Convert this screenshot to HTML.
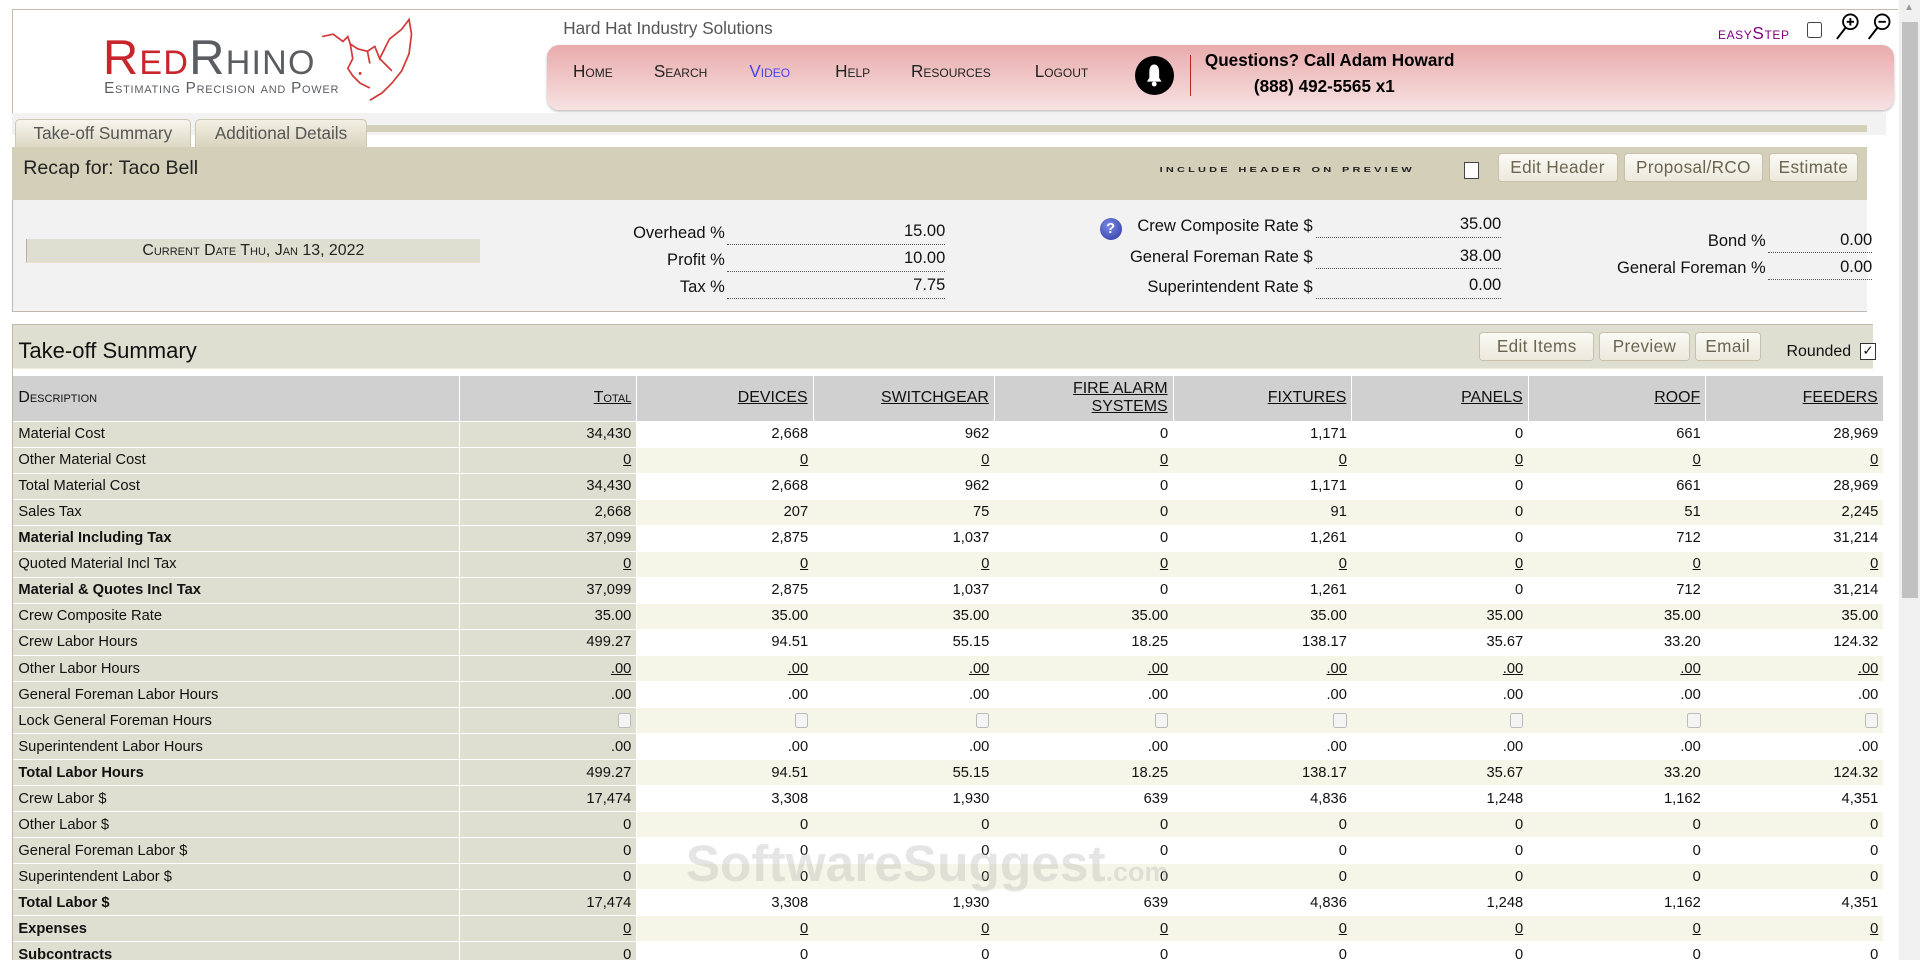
<!DOCTYPE html>
<html><head><meta charset="utf-8">
<style>
*{margin:0;padding:0;box-sizing:border-box}
html,body{width:1920px;height:960px;overflow:hidden;background:#fff}
#w{position:absolute;left:0;top:0;width:1568px;height:784px;zoom:1.22449;font-family:"Liberation Sans",sans-serif;color:#111;overflow:hidden}
.a{position:absolute}
.sc{font-variant:small-caps}
.btn{position:absolute;top:0;height:24px;border:1px solid #c8c0a8;border-radius:3px;background:linear-gradient(#fbfbf5,#ece9dc);color:#6b6450;font-size:14px;line-height:22px;text-align:center;white-space:nowrap;overflow:hidden;letter-spacing:.3px}
.lbl{position:absolute;font-size:13.5px;text-align:right;color:#111}
.val{position:absolute;font-size:13.5px;text-align:right;border-bottom:1px dotted #555;height:20px;line-height:18px}
table{border-collapse:collapse;position:absolute;left:11px;top:307px;table-layout:fixed;font-size:12px}
td,th{height:21.27px;padding:0 4px;white-space:nowrap;overflow:hidden;text-align:right;border-bottom:1px solid #fff}
th{background:#d0d0d0;height:37px;font-weight:normal;font-size:13px;line-height:15px;border-right:1px solid #fff}
td.d{background:#dfdfd1;text-align:left;border-right:1px solid #fff}
td.t{background:#dfdfd1;border-right:1px solid #fff}
tbody tr:nth-child(odd) td:not(.d):not(.t){background:#fff}
tbody tr:nth-child(even) td:not(.d):not(.t){background:#f6f6e8}
.cb{display:inline-block;width:11px;height:12px;border:1px solid #bbb;border-radius:2px;background:#f4f4f4;vertical-align:middle}
u{text-decoration:underline}
</style></head><body><div id="w">
<div class="a" style="left:10px;top:7px;width:1540px;height:1px;background:#c9b9a9"></div>
<div class="a" style="left:10px;top:7px;width:1px;height:85px;background:#c9b9a9"></div>
<div class="a" style="left:84px;top:27px;font-size:40px;letter-spacing:1px;line-height:42px;font-variant:small-caps"><span style="color:#c8262c">Red</span><span style="color:#5a5d62">Rhino</span></div>
<div class="a" style="left:85px;top:65px;font-size:12.5px;color:#5a5d62;font-variant:small-caps;letter-spacing:.6px">Estimating Precision and Power</div>
<svg class="a" style="left:258px;top:14px" width="84" height="70" viewBox="0 0 84 70"><path d="M5 16 L14 14 L22 20 L26 16 L28 22 L34 26 L42 28 L48 24 L52 34 L60 18 L70 10 L76 2 L78 14 L76 30 L70 44 L62 54 L54 62 L44 68 M52 34 L58 40 L62 44 M28 22 L30 34 L26 42 L30 48 L36 54 L44 58 M42 28 L44 38" fill="none" stroke="#d23a3a" stroke-width="1.4"/><circle cx="36" cy="46" r="1.2" fill="#d23a3a"/></svg>
<div class="a" style="left:460px;top:15px;font-size:14px;color:#555">Hard Hat Industry Solutions</div>
<div class="a" style="left:1403px;top:19px;font-size:14px;color:#800080;font-variant:small-caps;letter-spacing:.5px">easyStep</div>
<div class="a" style="left:1476px;top:18px;width:12px;height:13px;border:1px solid #444;border-radius:2px"></div>
<svg class="a" style="left:1496px;top:10px" width="50" height="24" viewBox="0 0 50 24"><circle cx="15" cy="8" r="6" fill="none" stroke="#000" stroke-width="1.5"/><path d="M15 5v6M12 8h6M11 13L4 22" stroke="#000" stroke-width="1.6" fill="none"/><circle cx="41" cy="8" r="6" fill="none" stroke="#000" stroke-width="1.5"/><path d="M38 8h6M37 13L30 22" stroke="#000" stroke-width="1.6" fill="none"/></svg>
<div class="a" style="left:447px;top:37px;width:1100px;height:53px;border-radius:10px;background:linear-gradient(#e9abac,#f7e2e2);box-shadow:0 1px 2px #bbb"></div>
<div class="a sc" style="left:468px;top:50px;font-size:14px;color:#222">Home</div>
<div class="a sc" style="left:534px;top:50px;font-size:14px;color:#222">Search</div>
<div class="a sc" style="left:612px;top:50px;font-size:14px;color:#44e">Video</div>
<div class="a sc" style="left:682px;top:50px;font-size:14px;color:#222">Help</div>
<div class="a sc" style="left:744px;top:50px;font-size:14px;color:#222">Resources</div>
<div class="a sc" style="left:845px;top:50px;font-size:14px;color:#222">Logout</div>
<div class="a" style="left:927px;top:46px;width:32px;height:32px;border-radius:50%;background:#000"></div>
<svg class="a" style="left:933px;top:51px" width="20" height="22" viewBox="0 0 20 22"><path d="M10 2c-3 0-4 3-4 6v5l-2 3h12l-2-3V8c0-3-1-6-4-6z" fill="#fff"/><circle cx="10" cy="18" r="2" fill="#fff"/></svg>
<div class="a" style="left:972px;top:45px;width:1px;height:33px;background:#b22"></div>
<div class="a" style="left:984px;top:41px;font-size:14px;font-weight:bold;color:#000">Questions? Call Adam Howard</div>
<div class="a" style="left:1024px;top:62px;font-size:14px;font-weight:bold;color:#000">(888) 492-5565 x1</div>
<div class="a" style="left:10px;top:92px;width:1530px;height:18px;background:#f2f2f2"></div>
<div class="a" style="left:300px;top:102px;width:1225px;height:6px;background:#d4cfb8"></div>
<div class="a" style="left:12px;top:97px;width:144px;height:24px;border:1px solid #cfc8b0;border-bottom:none;border-radius:4px 4px 0 0;background:linear-gradient(#f8f6ee,#dcd7c2);font-size:14px;color:#555;text-align:center;line-height:22px">Take-off Summary</div>
<div class="a" style="left:159px;top:97px;width:141px;height:24px;border:1px solid #cfc8b0;border-bottom:none;border-radius:4px 4px 0 0;background:linear-gradient(#f3f0e4,#d8d2bc);font-size:14px;color:#555;text-align:center;line-height:22px">Additional Details</div>
<div class="a" style="left:10px;top:120px;width:1515px;height:43px;background:#d4cfb8"></div>
<div class="a" style="left:19px;top:128px;font-size:16px;color:#222">Recap for: Taco Bell</div>
<div class="a" style="left:947px;top:131px;font-size:13px;font-weight:bold;letter-spacing:2.6px;color:#222;font-variant:small-caps;transform:scaleY(.7);white-space:nowrap">include header on preview</div>
<div class="a" style="left:1196px;top:132px;width:12px;height:14px;border:1px solid #444;background:#fff"></div>
<div style="position:absolute;left:1223px;top:125px"><div class="btn" style="left:0;width:98px">Edit Header</div><div class="btn" style="left:103px;width:114px">Proposal/RCO</div><div class="btn" style="left:222px;width:72px">Estimate</div></div>
<div class="a" style="left:10px;top:163px;width:1515px;height:92px;background:#f2f2f2;border-left:1px solid #c0b8b0;border-bottom:1px solid #c0b8b0"></div>
<div class="a sc" style="left:21px;top:195px;width:371px;height:20px;background:#dfdfd1;border-left:1px solid #b8b0a0;border-bottom:1px solid #f0e0c8;font-size:13px;text-align:center;line-height:20px;color:#222">Current Date Thu, Jan 13, 2022</div>
<div class="lbl" style="left:470px;top:182px;width:122px">Overhead %</div><div class="val" style="left:594px;top:180px;width:178px">15.00</div>
<div class="lbl" style="left:470px;top:204px;width:122px">Profit %</div><div class="val" style="left:594px;top:202px;width:178px">10.00</div>
<div class="lbl" style="left:470px;top:226px;width:122px">Tax %</div><div class="val" style="left:594px;top:224px;width:178px">7.75</div>
<div class="a" style="left:898px;top:178px;width:18px;height:18px;border-radius:50%;background:radial-gradient(circle at 40% 35%,#7a8ae8,#2a36a0);color:#fff;font-size:12px;font-weight:bold;text-align:center;line-height:18px">?</div>
<div class="lbl" style="left:900px;top:176px;width:172px">Crew Composite Rate $</div><div class="val" style="left:1075px;top:174px;width:151px">35.00</div>
<div class="lbl" style="left:880px;top:202px;width:192px">General Foreman Rate $</div><div class="val" style="left:1075px;top:200px;width:151px">38.00</div>
<div class="lbl" style="left:880px;top:226px;width:192px">Superintendent Rate $</div><div class="val" style="left:1075px;top:224px;width:151px">0.00</div>
<div class="lbl" style="left:1300px;top:189px;width:142px">Bond %</div><div class="val" style="left:1444px;top:187px;width:85px">0.00</div>
<div class="lbl" style="left:1300px;top:211px;width:142px">General Foreman %</div><div class="val" style="left:1444px;top:209px;width:85px">0.00</div>
<div class="a" style="left:10px;top:265px;width:1520px;height:36px;background:#dfdfd1;border-top:1px solid #c0b8a8;border-left:1px solid #c0b8a8;border-bottom:1px solid #f5ecd8"></div>
<div class="a" style="left:15px;top:276px;font-size:18px;color:#111">Take-off Summary</div>
<div style="position:absolute;left:1208px;top:271px"><div class="btn" style="left:0;width:94px">Edit Items</div><div class="btn" style="left:98px;width:74px">Preview</div><div class="btn" style="left:176px;width:54px">Email</div></div>
<div class="a" style="left:1459px;top:280px;font-size:13px;color:#111">Rounded</div>
<div class="a" style="left:1519px;top:280px;width:13px;height:14px;border:1px solid #333;font-size:11px;line-height:12px;text-align:center;background:#fff">✓</div>
<div class="a" style="left:10px;top:301px;width:1px;height:483px;background:#c0b8a8"></div>
<table>
<colgroup><col style="width:364px"><col style="width:145px"><col style="width:144px"><col style="width:148px"><col style="width:146px"><col style="width:146px"><col style="width:144px"><col style="width:145px"><col style="width:145px"></colgroup>
<thead><tr><th style="text-align:left" class="sc">Description</th><th class="sc"><u>Total</u></th><th><u>DEVICES</u></th><th><u>SWITCHGEAR</u></th><th><u>FIRE ALARM<br>SYSTEMS</u></th><th><u>FIXTURES</u></th><th><u>PANELS</u></th><th><u>ROOF</u></th><th><u>FEEDERS</u></th></tr></thead>
<tbody>
<tr><td class="d">Material Cost</td><td class="t">34,430</td><td>2,668</td><td>962</td><td>0</td><td>1,171</td><td>0</td><td>661</td><td>28,969</td></tr>
<tr><td class="d">Other Material Cost</td><td class="t"><u>0</u></td><td><u>0</u></td><td><u>0</u></td><td><u>0</u></td><td><u>0</u></td><td><u>0</u></td><td><u>0</u></td><td><u>0</u></td></tr>
<tr><td class="d">Total Material Cost</td><td class="t">34,430</td><td>2,668</td><td>962</td><td>0</td><td>1,171</td><td>0</td><td>661</td><td>28,969</td></tr>
<tr><td class="d">Sales Tax</td><td class="t">2,668</td><td>207</td><td>75</td><td>0</td><td>91</td><td>0</td><td>51</td><td>2,245</td></tr>
<tr><td class="d"><b>Material Including Tax</b></td><td class="t">37,099</td><td>2,875</td><td>1,037</td><td>0</td><td>1,261</td><td>0</td><td>712</td><td>31,214</td></tr>
<tr><td class="d">Quoted Material Incl Tax</td><td class="t"><u>0</u></td><td><u>0</u></td><td><u>0</u></td><td><u>0</u></td><td><u>0</u></td><td><u>0</u></td><td><u>0</u></td><td><u>0</u></td></tr>
<tr><td class="d"><b>Material &amp; Quotes Incl Tax</b></td><td class="t">37,099</td><td>2,875</td><td>1,037</td><td>0</td><td>1,261</td><td>0</td><td>712</td><td>31,214</td></tr>
<tr><td class="d">Crew Composite Rate</td><td class="t">35.00</td><td>35.00</td><td>35.00</td><td>35.00</td><td>35.00</td><td>35.00</td><td>35.00</td><td>35.00</td></tr>
<tr><td class="d">Crew Labor Hours</td><td class="t">499.27</td><td>94.51</td><td>55.15</td><td>18.25</td><td>138.17</td><td>35.67</td><td>33.20</td><td>124.32</td></tr>
<tr><td class="d">Other Labor Hours</td><td class="t"><u>.00</u></td><td><u>.00</u></td><td><u>.00</u></td><td><u>.00</u></td><td><u>.00</u></td><td><u>.00</u></td><td><u>.00</u></td><td><u>.00</u></td></tr>
<tr><td class="d">General Foreman Labor Hours</td><td class="t">.00</td><td>.00</td><td>.00</td><td>.00</td><td>.00</td><td>.00</td><td>.00</td><td>.00</td></tr>
<tr><td class="d">Lock General Foreman Hours</td><td class="t"><span class="cb"></span></td><td><span class="cb"></span></td><td><span class="cb"></span></td><td><span class="cb"></span></td><td><span class="cb"></span></td><td><span class="cb"></span></td><td><span class="cb"></span></td><td><span class="cb"></span></td></tr>
<tr><td class="d">Superintendent Labor Hours</td><td class="t">.00</td><td>.00</td><td>.00</td><td>.00</td><td>.00</td><td>.00</td><td>.00</td><td>.00</td></tr>
<tr><td class="d"><b>Total Labor Hours</b></td><td class="t">499.27</td><td>94.51</td><td>55.15</td><td>18.25</td><td>138.17</td><td>35.67</td><td>33.20</td><td>124.32</td></tr>
<tr><td class="d">Crew Labor $</td><td class="t">17,474</td><td>3,308</td><td>1,930</td><td>639</td><td>4,836</td><td>1,248</td><td>1,162</td><td>4,351</td></tr>
<tr><td class="d">Other Labor $</td><td class="t">0</td><td>0</td><td>0</td><td>0</td><td>0</td><td>0</td><td>0</td><td>0</td></tr>
<tr><td class="d">General Foreman Labor $</td><td class="t">0</td><td>0</td><td>0</td><td>0</td><td>0</td><td>0</td><td>0</td><td>0</td></tr>
<tr><td class="d">Superintendent Labor $</td><td class="t">0</td><td>0</td><td>0</td><td>0</td><td>0</td><td>0</td><td>0</td><td>0</td></tr>
<tr><td class="d"><b>Total Labor $</b></td><td class="t">17,474</td><td>3,308</td><td>1,930</td><td>639</td><td>4,836</td><td>1,248</td><td>1,162</td><td>4,351</td></tr>
<tr><td class="d"><b>Expenses</b></td><td class="t"><u>0</u></td><td><u>0</u></td><td><u>0</u></td><td><u>0</u></td><td><u>0</u></td><td><u>0</u></td><td><u>0</u></td><td><u>0</u></td></tr>
<tr><td class="d"><b>Subcontracts</b></td><td class="t">0</td><td>0</td><td>0</td><td>0</td><td>0</td><td>0</td><td>0</td><td>0</td></tr>
</tbody></table>
<div class="a" style="left:560px;top:680px;font-size:42px;font-weight:bold;color:rgba(180,180,180,.35)">SoftwareSuggest<span style="font-size:22px">.com</span></div>
<div class="a" style="left:1551px;top:0;width:17px;height:784px;background:#f0f0f0"></div>
<div class="a" style="left:1553px;top:18px;width:13px;height:470px;background:#c1c1c1"></div>
<div class="a" style="left:1555px;top:2px;font-size:8px;color:#999">▲</div>
</div></body></html>
